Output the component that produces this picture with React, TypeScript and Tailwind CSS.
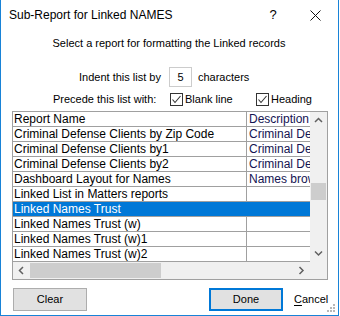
import React from 'react';

const rows = [
  {name: 'Criminal Defense Clients by Zip Code', desc: 'Criminal Defense'},
  {name: 'Criminal Defense Clients by1', desc: 'Criminal Defense'},
  {name: 'Criminal Defense Clients by2', desc: 'Criminal Defense'},
  {name: 'Dashboard Layout for Names', desc: 'Names browse'},
  {name: 'Linked List in Matters reports', desc: ''},
  {name: 'Linked Names Trust', desc: '', selected: true},
  {name: 'Linked Names Trust (w)', desc: ''},
  {name: 'Linked Names Trust (w)1', desc: ''},
  {name: 'Linked Names Trust (w)2', desc: ''},
];

const Chevron = ({dir}: {dir: 'up' | 'down' | 'left' | 'right'}) => {
  const pts = {
    up: '1,5 4.5,1.5 8,5',
    down: '1,1.5 4.5,5 8,1.5',
    left: '5,1 1.5,4.5 5,8',
    right: '1.5,1 5,4.5 1.5,8',
  }[dir];
  const vertical = dir === 'up' || dir === 'down';
  return (
    <svg width={vertical ? 9 : 7} height={vertical ? 7 : 9} viewBox={vertical ? '0 0 9 7' : '0 0 7 9'}>
      <polyline points={pts} fill="none" stroke="#606060" strokeWidth="1.5" />
    </svg>
  );
};

const CheckBox = () => (
  <span className="w-[13px] h-[13px] border border-[#333333] bg-white flex items-center justify-center">
    <svg width="11" height="11" viewBox="0 0 11 11">
      <polyline points="1.5,5.5 4,8.5 9.5,2" fill="none" stroke="#333333" strokeWidth="1.1" />
    </svg>
  </span>
);

const TitleBar = () => (
  <div className="h-[30px] flex items-center">
    <span className="pl-[8px] text-[12px] text-black">Sub-Report for Linked NAMES</span>
    <span className="ml-auto w-[44px] pl-[6px] text-center text-[13px] text-black">?</span>
    <span className="w-[46px] flex justify-center">
      <svg width="11" height="11" viewBox="0 0 11 11">
        <path d="M0.5 0.5 L10.5 10.5 M10.5 0.5 L0.5 10.5" stroke="#111111" strokeWidth="1" />
      </svg>
    </span>
  </div>
);

const ReportTable = () => (
  <div className="ml-[11px] w-[316px] h-[169px] border border-[#a0a0a0] grid grid-cols-[1fr_17px] grid-rows-[1fr_17px]">
    <div className="overflow-hidden text-[12px] leading-[14px] whitespace-nowrap">
      <div className="flex h-[15px] border-b border-[#a0a0a0] text-black">
        <div className="w-[234px] shrink-0 border-r border-[#a0a0a0] pl-[1px]">Report Name</div>
        <div className="flex-1 overflow-hidden pl-[2px] text-[#141452]">Description</div>
      </div>
      {rows.map((r) => (
        <div
          key={r.name}
          className={
            r.selected
              ? 'flex h-[15px] border-b border-[#a0a0a0] bg-[#0078d7] text-white'
              : 'flex h-[15px] border-b border-[#a0a0a0] bg-white text-black'
          }
        >
          <div
            className={
              r.selected
                ? 'w-[234px] shrink-0 border-r border-[#0078d7] pl-[1px]'
                : 'w-[234px] shrink-0 border-r border-[#a0a0a0] pl-[1px]'
            }
          >
            {r.name}
          </div>
          <div className={r.selected ? 'flex-1 overflow-hidden pl-[2px]' : 'flex-1 overflow-hidden pl-[2px] text-[#141452]'}>
            {r.desc}
          </div>
        </div>
      ))}
    </div>
    <div className="bg-[#f0f0f0] flex flex-col items-center">
      <div className="h-[17px] flex items-center justify-center">
        <Chevron dir="up" />
      </div>
      <div className="flex-1 w-full px-[1px]">
        <div className="mt-[54px] h-[17px] bg-[#cdcdcd]" />
      </div>
      <div className="h-[17px] flex items-center justify-center">
        <Chevron dir="down" />
      </div>
    </div>
    <div className="bg-[#f0f0f0] flex items-center">
      <div className="w-[17px] h-full flex items-center justify-center">
        <Chevron dir="left" />
      </div>
      <div className="flex-1 h-full py-[1px]">
        <div className="w-[131px] h-full bg-[#cdcdcd]" />
      </div>
      <div className="w-[17px] h-full flex items-center justify-center">
        <Chevron dir="right" />
      </div>
    </div>
    <div className="bg-[#f0f0f0]" />
  </div>
);

const SizeGrip = () => (
  <svg className="absolute right-[3px] bottom-[3px]" width="10" height="10" viewBox="0 0 10 10">
    {[
      [8, 0],
      [5, 3],
      [8, 3],
      [2, 6],
      [5, 6],
      [8, 6],
    ].map(([x, y]) => (
      <rect key={`${x}-${y}`} x={x} y={y + 2} width="2" height="2" fill="#b8b8b8" />
    ))}
  </svg>
);

export default function App() {
  return (
    <div className="w-[340px] h-[316px] bg-white font-['Liberation_Sans',Arial,sans-serif]">
      <div className="relative w-[339px] h-[316px] border-l border-r border-b border-[#1883d7] bg-white flex flex-col">
        <TitleBar />
        <div className="mt-[5px] h-[16px] leading-[16px] text-[11px] text-black text-center pr-[1px]">
          Select a report for formatting the Linked records
        </div>
        <div className="mt-[16px] h-[20px] flex items-center text-[11px] text-black pl-[78px]">
          <span>Indent this list by</span>
          <span className="ml-[8px] w-[23px] h-[20px] border border-[#cccccc] flex items-center justify-center">5</span>
          <span className="ml-[6px]">characters</span>
        </div>
        <div className="mt-[5px] h-[14px] flex items-center text-[11px] text-black pl-[52px]">
          <span className="w-[117px]">Precede this list with:</span>
          <span className="w-[86px] flex items-center gap-[2px]">
            <CheckBox />
            <span>Blank line</span>
          </span>
          <span className="flex items-center gap-[2px]">
            <CheckBox />
            <span>Heading</span>
          </span>
        </div>
        <div className="mt-[5px]">
          <ReportTable />
        </div>
        <div className="mt-[8px] flex items-center text-[11px] text-black">
          <button className="ml-[12px] w-[74px] h-[23px] bg-[#e1e1e1] border border-[#adadad]">Clear</button>
          <button className="ml-[122px] w-[74px] h-[23px] bg-[#e1e1e1] border-2 border-[#0078d7]">Done</button>
          <span className="ml-[11px]">
            <span className="underline underline-offset-2">C</span>ancel
          </span>
        </div>
        <SizeGrip />
      </div>
    </div>
  );
}
